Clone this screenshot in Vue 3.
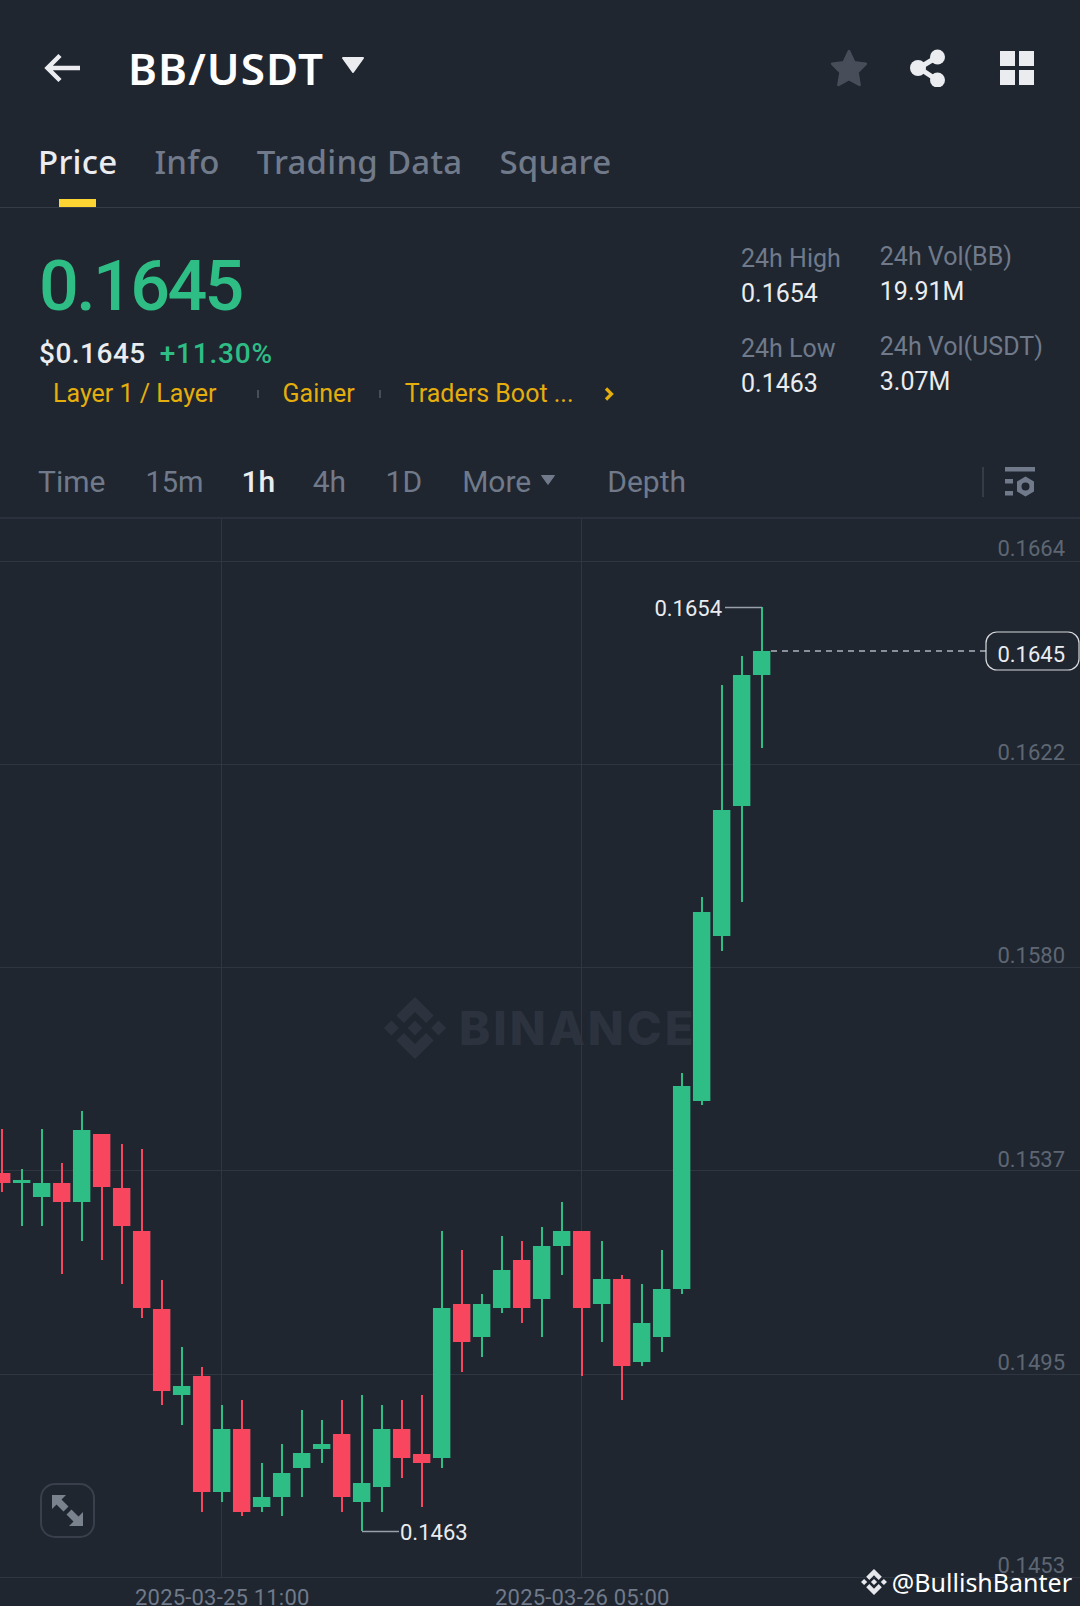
<template>
  <div class="page">
    <!-- 상단 헤더 -->
    <div class="topbar">
      <svg class="back" viewBox="0 0 38 30" width="38" height="30">
        <path d="M36 15H4M16 2.500 3.500 15 16 27.500" fill="none" stroke="#eaecef" stroke-width="4.500" />
      </svg>
      <span class="pair">BB/USDT</span>
      <svg class="caret" viewBox="0 0 24 18" width="24" height="18">
        <path d="M2 2h20L12 16z" fill="#eaecef" stroke="#eaecef" stroke-width="2" stroke-linejoin="round" />
      </svg>
      <div class="topIcons">
        <svg viewBox="0 0 38 38" width="40" height="40">
          <path d="M19 3l5 10.500 11 1.500-8 8 2 12-10-5.500-10 5.500 2-12-8-8 11-1.500z" fill="#474d59" stroke="#474d59" stroke-width="2.500" stroke-linejoin="round" />
        </svg>
        <svg viewBox="0 0 38 38" width="38" height="38">
          <path d="M10 19 28 8M10 19l18 12" stroke="#eaecef" stroke-width="5" />
          <circle cx="9" cy="19" r="8" fill="#eaecef" />
          <circle cx="28.500" cy="8" r="7.500" fill="#eaecef" />
          <circle cx="28.500" cy="31" r="7.500" fill="#eaecef" />
        </svg>
        <div class="gridIcon"><i></i><i></i><i></i><i></i></div>
      </div>
    </div>

    <!-- 탭 -->
    <div class="tabs">
      <span v-for="tab in tabs" :key="tab" class="tab" :class="{ on: tab === 'Price' }">{{ tab }}</span>
    </div>

    <!-- 가격 요약 -->
    <div class="summary">
      <div class="priceBox">
        <div class="bigPrice">0.1645</div>
        <div class="subPrice"><span class="usd">$0.1645</span><span class="up">+11.30%</span></div>
        <div class="tags">
          <span class="t1">Layer 1 / Layer</span><i></i>
          <span>Gainer</span><i></i>
          <span>Traders Boot ...</span>
          <svg viewBox="0 0 10 14" width="10" height="14">
            <path d="M2 1.500 7.500 7 2 12.500" fill="none" stroke="#e5ae0c" stroke-width="3.200" />
          </svg>
        </div>
      </div>
      <div class="stats">
        <div class="statCol">
          <div class="stat"><label>24h High</label><b>0.1654</b></div>
          <div class="stat"><label>24h Low</label><b>0.1463</b></div>
        </div>
        <div class="statCol second">
          <div class="stat"><label>24h Vol(BB)</label><b>19.91M</b></div>
          <div class="stat"><label>24h Vol(USDT)</label><b>3.07M</b></div>
        </div>
      </div>
    </div>

    <!-- 기간 선택 -->
    <div class="periods">
      <span class="p time">Time</span>
      <span class="p m15">15m</span>
      <span class="p h1">1h</span>
      <span class="p h4">4h</span>
      <span class="p d1">1D</span>
      <span class="p more">More</span>
      <svg class="moreCaret" viewBox="0 0 16 12" width="16" height="12">
        <path d="M1.500 1.500h13L8 10.500z" fill="#707a8a" stroke="#707a8a" stroke-linejoin="round" />
      </svg>
      <span class="p depth">Depth</span>
      <span class="divider"></span>
      <svg class="setIcon" viewBox="0 0 30 30" width="30" height="30">
        <rect x="0" y="0" width="30" height="4.500" fill="#707a8a" />
        <rect x="0" y="12" width="8" height="4.500" fill="#707a8a" />
        <rect x="0" y="24" width="8" height="4.500" fill="#707a8a" />
        <path d="M20.500 9.500l8.500 5v10l-8.500 5-8.500-5v-10z" fill="#707a8a" />
        <circle cx="20.500" cy="19.500" r="4" fill="#1f2630" />
      </svg>
    </div>

    <!-- 차트 -->
    <div class="chart">
      <svg viewBox="0 519 1080 1087" width="1080" height="1087">
        <line v-for="y in hLines" :key="y" x1="0" x2="1080" :y1="y + 0.5" :y2="y + 0.5" class="grid" />
        <line x1="221.500" x2="221.500" y1="519" y2="1577" class="grid" />
        <line x1="581.500" x2="581.500" y1="519" y2="1577" class="grid" />

        <g fill="#2c333e">
          <polygon v-for="(pts, i) in logoShapes" :key="i" :points="pts" transform="translate(384 997) scale(0.62)" />
          <text x="459" y="1045" class="wm">BINANCE</text>
        </g>

        <g v-for="(c, i) in candles" :key="i" :fill="c[0] ? '#2ebd85' : '#f9465f'">
          <rect :x="1 + i * 20" :y="c[1]" width="2" :height="c[2] - c[1]" />
          <rect :x="1.670 + i * 20 - 8.700" :y="c[3]" width="17.400" :height="c[4] - c[3]" />
        </g>

        <text v-for="a in axis" :key="a.t" x="1065" :y="a.y + 8" text-anchor="end" class="axis">{{ a.t }}</text>

        <!-- 고가 / 저가 표시 -->
        <path d="M725 607.500h37M362 1531.500h37" stroke="#9aa0aa" stroke-width="1.500" fill="none" />
        <text x="722" y="616" text-anchor="end" class="mark">0.1654</text>
        <text x="400" y="1540" class="mark">0.1463</text>

        <line x1="771" x2="986" y1="651" y2="651" stroke="#aeb3ba" stroke-width="1.500" stroke-dasharray="6 5" />
        <rect x="986" y="632" width="93" height="38" rx="11" fill="#1f2630" stroke="#d8dadd" stroke-width="1.200" />
        <text x="1065" y="662" text-anchor="end" class="mark">0.1645</text>

        <text x="135" y="1605" class="date">2025-03-25 11:00</text>
        <text x="495" y="1605" class="date">2025-03-26 05:00</text>

        <rect x="41" y="1484" width="53" height="53" rx="14" fill="none" stroke="#39404b" stroke-width="2" />
        <g fill="#7a828e">
          <path d="M52 1495h14l-4.500 4.500 7 7-5 5-7-7-4.500 4.500z" />
          <path d="M83 1526H69l4.500-4.500-7-7 5-5 7 7 4.500-4.500z" />
        </g>
      </svg>
    </div>

    <!-- 워터마크 -->
    <div class="credit">
      <svg viewBox="0 0 100 100" width="26" height="26">
        <polygon v-for="(pts, i) in logoShapes" :key="i" :points="pts" fill="#e6e8eb" />
      </svg>
      <span>@BullishBanter</span>
    </div>
  </div>
</template>

<script setup>
const tabs = ["Price", "Info", "Trading Data", "Square"];
const hLines = [561, 764, 967, 1170, 1374, 1577];

const axis = [
  { t: "0.1664", y: 548 },
  { t: "0.1622", y: 752 },
  { t: "0.1580", y: 955 },
  { t: "0.1537", y: 1159 },
  { t: "0.1495", y: 1362 },
  { t: "0.1453", y: 1565 },
];

const logoShapes = [
  "50,0 80,30 68,42 50,24 32,42 20,30",
  "50,100 80,70 68,58 50,76 32,58 20,70",
  "50,38 62,50 50,62 38,50",
  "0,50 12,38 24,50 12,62",
  "76,50 88,38 100,50 88,62",
];

// [up, wickTop, wickBottom, bodyTop, bodyBottom]
const candles = [
  [0, 1129, 1192, 1173, 1183],
  [1, 1169, 1226, 1180, 1183],
  [1, 1129, 1226, 1183, 1197],
  [0, 1163, 1274, 1183, 1202],
  [1, 1111, 1241, 1130, 1202],
  [0, 1134, 1260, 1134, 1187],
  [0, 1144, 1284, 1188, 1226],
  [0, 1149, 1318, 1231, 1308],
  [0, 1280, 1405, 1309, 1391],
  [1, 1347, 1425, 1386, 1395],
  [0, 1367, 1512, 1376, 1492],
  [1, 1405, 1502, 1429, 1492],
  [0, 1400, 1516, 1429, 1512],
  [1, 1463, 1512, 1497, 1507],
  [1, 1444, 1516, 1473, 1497],
  [1, 1410, 1497, 1453, 1468],
  [1, 1420, 1463, 1444, 1449],
  [0, 1400, 1512, 1434, 1497],
  [1, 1395, 1531, 1483, 1502],
  [1, 1405, 1512, 1429, 1487],
  [0, 1400, 1478, 1429, 1458],
  [0, 1395, 1507, 1454, 1463],
  [1, 1231, 1468, 1308, 1458],
  [0, 1250, 1372, 1304, 1342],
  [1, 1294, 1357, 1304, 1337],
  [1, 1236, 1313, 1270, 1308],
  [0, 1241, 1323, 1260, 1308],
  [1, 1227, 1337, 1246, 1299],
  [1, 1202, 1275, 1231, 1246],
  [0, 1231, 1376, 1231, 1308],
  [1, 1241, 1342, 1279, 1304],
  [0, 1275, 1400, 1279, 1366],
  [1, 1284, 1366, 1323, 1362],
  [1, 1250, 1352, 1289, 1337],
  [1, 1073, 1294, 1086, 1289],
  [1, 897, 1105, 912, 1101],
  [1, 685, 951, 810, 936],
  [1, 656, 902, 675, 806],
  [1, 607, 748, 651, 675],
];
</script>

<style>
body {
  background: #1f2630;
}
</style>

<style scoped>
.page {
  position: relative;
  width: 1080px;
  height: 1606px;
  overflow: hidden;
  background: #1f2630;
  color: #eaecef;
  font-family: "Noto Sans", sans-serif;
}

.topbar {
  display: flex;
  align-items: center;
  height: 136px;
  padding-left: 44px;
}

.back {
  margin-right: 46px;
}

.pair {
  font-size: 44px;
  font-weight: 600;
  color: #fff;
  letter-spacing: 1.100px;
}

.caret {
  margin: 0 0 6px 17px;
}

.topIcons {
  display: flex;
  align-items: center;
  margin-left: auto;
  margin-right: 46px;
  gap: 40px;
}

.gridIcon {
  display: grid;
  grid-template-columns: 15px 15px;
  grid-template-rows: 15px 15px;
  gap: 4px;
  margin-left: 13px;
}

.gridIcon i {
  background: #eaecef;
}

.tabs {
  display: flex;
  gap: 37px;
  height: 71px;
  padding-left: 38px;
  border-bottom: 1px solid #363c47;
  font-size: 33px;
  line-height: 52px;
  letter-spacing: 0.250px;
  color: #707a8a;
}

.tab {
  position: relative;
  font-weight: 500;
}

.tab.on {
  color: #eaecef;
}

.tab.on::after {
  content: "";
  position: absolute;
  left: 21px;
  bottom: 0;
  width: 37px;
  height: 8px;
  background: #fcd535;
}

.summary {
  display: flex;
  height: 240px;
  font-family: Roboto, sans-serif;
}

.priceBox {
  width: 741px;
  padding-left: 39px;
  box-sizing: border-box;
}

.bigPrice {
  margin-top: 37px;
  font-size: 70px;
  line-height: 82px;
  font-weight: 500;
  letter-spacing: -2.600px;
  color: #2ebd85;
}

.subPrice {
  display: flex;
  gap: 14px;
  margin-top: 9px;
  font-size: 28px;
  line-height: 36px;
  font-weight: 500;
}

.subPrice .usd {
  letter-spacing: 0.500px;
}

.subPrice .up {
  color: #2ebd85;
  letter-spacing: 0.800px;
}

.tags {
  display: flex;
  align-items: center;
  margin-top: 4px;
  padding-left: 14px;
  font-size: 25px;
  line-height: 36px;
  color: #e5ae0c;
}

.tags i {
  width: 2px;
  height: 8px;
  margin: 0 24px;
  background: #474d59;
}

.tags .t1 {
  margin-right: 16px;
}

.tags svg {
  margin-left: 30px;
}

.stats {
  display: flex;
  gap: 39px;
  padding-top: 33px;
  font-size: 25px;
}

.statCol {
  min-width: 97px;
}

.statCol.second {
  margin-top: -2px;
}

.stat {
  height: 90px;
}

.stat label {
  display: block;
  line-height: 36px;
  color: #707a8a;
}

.stat b {
  display: block;
  line-height: 34px;
  font-weight: 400;
  color: #eaecef;
}

.periods {
  position: relative;
  display: flex;
  align-items: center;
  height: 71px;
  box-sizing: border-box;
  padding-bottom: 2px;
  font-family: Roboto, sans-serif;
  font-size: 30px;
  color: #707a8a;
  border-bottom: 2px solid #2b323d;
}

.p {
  flex: none;
}

.time {
  margin-left: 38px;
}

.m15 {
  margin-left: 40px;
  font-size: 29px;
}

.h1 {
  margin-left: 38px;
  color: #eaecef;
  font-weight: 500;
}

.h4 {
  margin-left: 37.500px;
}

.d1 {
  margin-left: 39.500px;
}

.more {
  margin-left: 40px;
}

.moreCaret {
  margin: 0 0 4px 9px;
}

.depth {
  margin-left: 51px;
}

.divider {
  width: 2px;
  height: 30px;
  margin-left: auto;
  background: #363c47;
}

.setIcon {
  margin: 0 45px 0 21px;
}

.chart svg {
  display: block;
}

.grid {
  stroke: #2f3641;
  stroke-width: 1;
}

.wm {
  font-family: Inter, sans-serif;
  font-size: 47px;
  font-weight: 800;
  letter-spacing: 3px;
}

.axis {
  font-family: Roboto, sans-serif;
  font-size: 22px;
  fill: #5e6673;
}

.mark {
  font-family: Roboto, sans-serif;
  font-size: 22px;
  fill: #eaecef;
}

.date {
  font-family: Roboto, sans-serif;
  font-size: 22px;
  letter-spacing: 0.200px;
  fill: #707a8a;
}

.credit {
  position: absolute;
  right: 8px;
  bottom: 7px;
  display: flex;
  align-items: center;
  gap: 5px;
  font-size: 25px;
  color: #fff;
}
</style>
